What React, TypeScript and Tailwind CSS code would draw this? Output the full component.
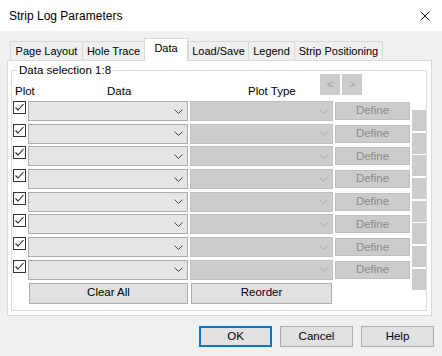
const ROWS = [0, 1, 2, 3, 4, 5, 6, 7]

const TABS = [
  { label: 'Page Layout', w: 'w-[72px]' },
  { label: 'Hole Trace', w: 'w-[62px]' },
  { label: 'Data', w: 'w-[44px]', active: true },
  { label: 'Load/Save', w: 'w-[60px]' },
  { label: 'Legend', w: 'w-[46px]' },
  { label: 'Strip Positioning', w: 'w-[89px]' },
]

function Chevron({ color }: { color: string }) {
  return (
    <svg width="9" height="5" viewBox="0 0 9 5" className="shrink-0">
      <polyline points="0.5,0.5 4.5,4.5 8.5,0.5" fill="none" stroke={color} strokeWidth="1" />
    </svg>
  )
}

function Check() {
  return (
    <svg width="11" height="11" viewBox="0 0 11 11">
      <polyline points="1.5,5.5 4,8 9.5,2" fill="none" stroke="#222" strokeWidth="1.1" />
    </svg>
  )
}

export default function App() {
  return (
    <div className="w-[442px] h-[356px] bg-[#f0f0f0] flex flex-col overflow-hidden text-[11.5px] text-black font-['Segoe_UI','Liberation_Sans',Arial,sans-serif]">
      {/* Title bar */}
      <div className="h-[31px] bg-white flex items-center justify-between pl-[9px] pr-[12px]">
        <span className="leading-none text-[12px]">Strip Log Parameters</span>
        <svg width="10" height="10" viewBox="0 0 10 10">
          <path d="M0.5 0.5 L9.5 9.5 M9.5 0.5 L0.5 9.5" stroke="#111" strokeWidth="1" />
        </svg>
      </div>

      <div className="px-[7px] pt-[7px]">
        {/* Tabs */}
        <div className="flex items-end h-[22px] pl-[3px] text-[11px]">
          {TABS.map((t, i) => (
            <div
              key={t.label}
              className={`${t.w} flex items-center justify-center border-t border-l border-[#d9d9d9] ${
                i === TABS.length - 1 ? 'border-r' : ''
              } ${
                t.active
                  ? 'h-[23px] bg-white border-r -mb-px relative z-10 pb-[3px]'
                  : 'h-[19px] bg-[#f0f0f0]'
              }`}
            >
              {t.label}
            </div>
          ))}
        </div>

        {/* Tab panel */}
        <div className="w-[425px] h-[256px] bg-white border border-[#d9d9d9] pl-[3px] pt-[9px]">
          <div className="relative w-[416px] h-[241px] border border-[#dcdcdc]">
            <span className="absolute -top-[8px] left-[5px] bg-white px-[2px] leading-[14px]">
              Data selection 1:8
            </span>

            {/* Header */}
            <div className="flex items-start h-[30px]">
              <span className="w-[92px] pl-[3px] pt-[13px] leading-[14px]">Plot</span>
              <span className="w-[141px] pl-[3px] pt-[13px] leading-[14px]">Data</span>
              <span className="w-[75px] pl-[3px] pt-[13px] leading-[14px]">Plot Type</span>
              <div className="flex gap-[2px] mt-[3px]">
                <div className="w-[20px] h-[21px] bg-[#cccccc] flex items-center justify-center text-[#a3a3a3]">&lt;</div>
                <div className="w-[20px] h-[21px] bg-[#cccccc] flex items-center justify-center text-[#a3a3a3]">&gt;</div>
              </div>
            </div>

            <div className="flex">
              <div className="w-[398px] flex flex-col">
                {ROWS.map(r => (
                  <div key={r} className="h-[22.7px] flex items-start">
                    <div className="ml-[1px] w-[13px] h-[13px] border border-[#333] bg-white flex items-center justify-center">
                      <Check />
                    </div>
                    <div className="ml-[2px] w-[160px] h-[20px] bg-[#e5e5e5] border border-[#adadad] flex items-center justify-end pr-[4px]">
                      <Chevron color="#444" />
                    </div>
                    <div className="ml-[2px] w-[143px] h-[20px] bg-[#cccccc] border border-[#bfbfbf] flex items-center justify-end pr-[4px]">
                      <Chevron color="#a8a8a8" />
                    </div>
                    <div className="ml-[2px] mt-[1px] w-[75px] h-[18px] bg-[#cccccc] border border-[#bfbfbf] flex items-center justify-center text-[#8a8a8a]">
                      Define
                    </div>
                  </div>
                ))}
                <div className="flex">
                  <button className="ml-[17px] w-[159px] h-[21px] bg-[#e1e1e1] border border-[#adadad] flex items-center justify-center">
                    Clear All
                  </button>
                  <button className="ml-[3px] w-[141px] h-[21px] bg-[#e1e1e1] border border-[#adadad] flex items-center justify-center">
                    Reorder
                  </button>
                </div>
              </div>
              <div className="ml-[2px] pt-[9px] flex flex-col">
                {ROWS.map(r => (
                  <div key={r} className="h-[22.7px]">
                    <div className="w-[14px] h-[21px] bg-[#cccccc]" />
                  </div>
                ))}
              </div>
            </div>
          </div>
        </div>

        {/* Dialog buttons */}
        <div className="flex justify-end gap-[8px] mt-[10px] pr-[1px]">
          <button className="w-[73px] h-[21px] bg-[#e1e1e1] border-2 border-[#0078d7] flex items-center justify-center">
            OK
          </button>
          <button className="w-[73px] h-[21px] bg-[#e1e1e1] border border-[#adadad] flex items-center justify-center">
            Cancel
          </button>
          <button className="w-[73px] h-[21px] bg-[#e1e1e1] border border-[#adadad] flex items-center justify-center">
            Help
          </button>
        </div>
      </div>
    </div>
  )
}
